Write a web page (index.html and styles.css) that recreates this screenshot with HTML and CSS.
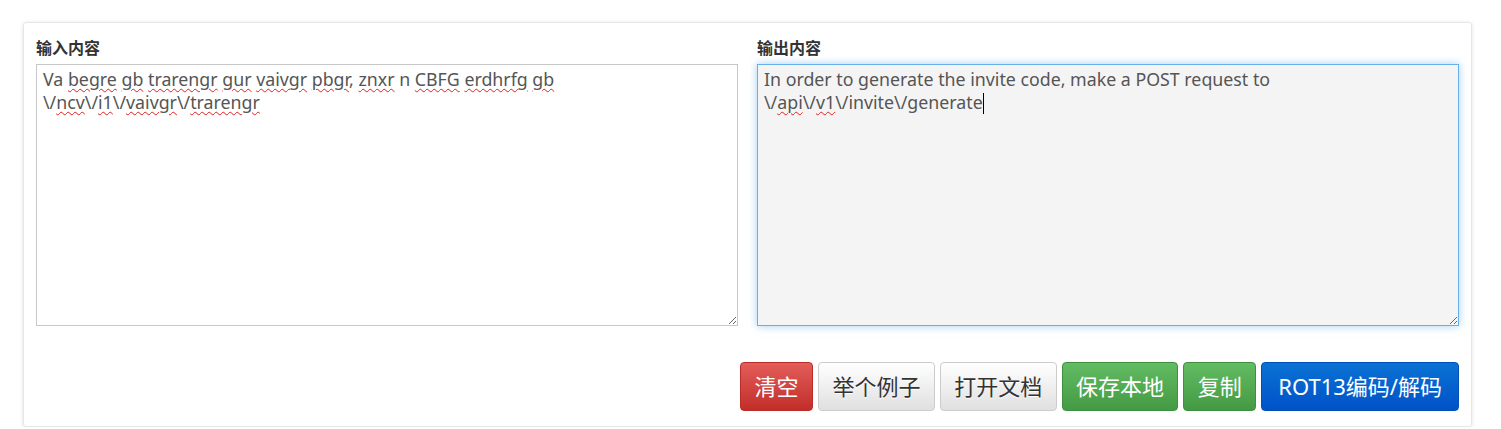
FILE: index.html
```html
<!DOCTYPE html>
<html lang="zh-CN">
<head>
<meta charset="utf-8">
<title>ROT13编码/解码</title>
<link rel="stylesheet" href="styles.css">
</head>
<body>
<div class="card">
  <div class="panes">
    <div class="pane">
      <label class="label">输入内容</label>
      <div class="box" role="textbox">Va <span class="sp">begre</span> <span class="sp">gb</span> <span class="sp">trarengr</span> <span class="sp">gur</span> <span class="sp">vaivgr</span> <span class="sp">pbgr</span>, <span class="sp">znxr</span> n <span class="sp">CBFG</span> <span class="sp">erdhrfg</span> <span class="sp">gb</span><br>\/<span class="sp">ncv</span>\/<span class="sp">i1</span>\/<span class="sp">vaivgr</span>\/<span class="sp">trarengr</span></div>
    </div>
    <div class="pane">
      <label class="label">输出内容</label>
      <div class="box box-out" role="textbox">In order to generate the invite code, make a POST request to<br>\/<span class="sp">api</span>\/<span class="sp">v1</span>\/invite\/generate<span class="caret"></span></div>
    </div>
  </div>
  <div class="actions">
    <button class="btn btn-danger">清空</button>
    <button class="btn btn-default">举个例子</button>
    <button class="btn btn-default">打开文档</button>
    <button class="btn btn-success">保存本地</button>
    <button class="btn btn-success">复制</button>
    <button class="btn btn-primary">ROT13编码/解码</button>
  </div>
</div>
</body>
</html>
```

FILE: styles.css
```css
html, body {
  margin: 0;
  background: #fff;
}
body {
  padding: 22px 0 0 23px;
  font-family: "Noto Sans", "Noto Sans CJK SC", sans-serif;
}
.card {
  width: 1423px;
  padding: 12px 12px 15px 12px;
  border: 1px solid #e6e6e6;
  border-radius: 3px;
  box-shadow: 0 1px 4px rgba(0, 0, 0, 0.12);
}
.panes {
  display: flex;
  gap: 19px;
}
.pane {
  width: 702px;
  display: flex;
  flex-direction: column;
}
.label {
  font-family: "Noto Sans CJK SC", sans-serif;
  font-weight: bold;
  font-size: 16px;
  line-height: 22px;
  color: #333;
  margin: 1px 0 6px 0;
}
.box {
  box-sizing: border-box;
  height: 262px;
  padding: 3px 6px;
  border: 1px solid #c8c8c8;
  background: #fff;
  color: #555;
  font-family: "Noto Sans", "Noto Sans CJK SC", sans-serif;
  font-size: 17.8px;
  line-height: 23px;
  resize: vertical;
  overflow: auto;
}
.box-out {
  background: #f4f4f4;
  border-color: #66afe9;
  box-shadow: 0 0 8px rgba(102, 175, 233, 0.6);
}
.sp {
  text-decoration: underline wavy #e02020;
  text-decoration-thickness: 1px;
  text-underline-offset: 2px;
}
.caret {
  display: inline-block;
  width: 1px;
  height: 21px;
  background: #000;
  vertical-align: -5px;
}
.actions {
  display: flex;
  justify-content: flex-end;
  gap: 5px;
  margin-top: 36px;
}
.btn {
  height: 49px;
  padding: 0 13.4px;
  border: 1px solid #ccc;
  border-radius: 4px;
  font-family: "Noto Sans", "Noto Sans CJK SC", sans-serif;
  font-size: 22px;
  line-height: 47px;
  cursor: pointer;
}
.btn-default {
  color: #333;
  background: linear-gradient(to bottom, #fff 0, #e0e0e0 100%);
  border-color: #ccc;
  text-shadow: 0 1px 0 #fff;
}
.btn-danger {
  color: #fff;
  background: linear-gradient(to bottom, #e35d59 0, #c12e2a 100%);
  border-color: #b92c28;
}
.btn-success {
  color: #fff;
  background: linear-gradient(to bottom, #62bc62 0, #449a44 100%);
  border-color: #3e8f3e;
}
.btn-primary {
  color: #fff;
  background: linear-gradient(to bottom, #0a72d4 0, #0052c8 100%);
  border-color: #0050b4;
  padding: 0 16px;
}
```
